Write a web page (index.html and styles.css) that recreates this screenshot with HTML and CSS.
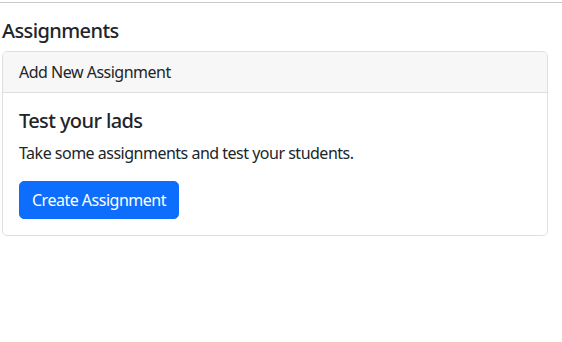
FILE: index.html
```html
<!DOCTYPE html>
<html lang="en">
<head>
    <meta charset="UTF-8">
    <meta name="viewport" content="width=device-width, initial-scale=1.0">
    <title>Assignments</title>
    <link rel="stylesheet" href="styles.css">
</head>
<body>
    <hr class="divider">
    <div class="content">
        <h5 class="section-title">Assignments</h5>
        <div class="card">
            <div class="card-header">Add New Assignment</div>
            <div class="card-body">
                <h5 class="card-title">Test your lads</h5>
                <p class="card-text">Take some assignments and test your students.</p>
                <button class="btn btn-primary">Create Assignment</button>
            </div>
        </div>
    </div>
</body>
</html>
```

FILE: styles.css
```css
body {
    font-family: 'Noto Sans', 'Open Sans', sans-serif;
    font-size: 16px;
    line-height: 1.5;
    letter-spacing: -0.5px;
    margin: 0;
    color: #212529;
    background: #fff;
}
.divider {
    margin: 2px 0 16px;
    border: 0;
    border-top: 1px solid #c8c9ca;
}
.content {
    width: 546px;
    padding: 0 2px;
}
.section-title {
    margin: 0 0 8px;
    font-size: 20px;
    font-weight: 500;
    line-height: 1.2;
    letter-spacing: -0.6px;
}
.card {
    border: 1px solid #dfdfdf;
    border-radius: 5px;
    overflow: hidden;
}
.card-header {
    padding: 8px 16px;
    background: #f7f7f7;
    border-bottom: 1px solid #dfdfdf;
}
.card-body {
    padding: 16px;
}
.card-title {
    margin: 0 0 8px;
    font-size: 20px;
    font-weight: 500;
    line-height: 1.2;
    letter-spacing: -0.6px;
}
.card-text {
    margin: 0 0 16px;
}
.btn {
    font-family: inherit;
    font-size: 16px;
    line-height: 1.5;
    letter-spacing: -0.5px;
    padding: 6px 12px;
    border: 1px solid transparent;
    border-radius: 5px;
    cursor: pointer;
}
.btn-primary {
    background: #0d6efd;
    border-color: #0d6efd;
    color: #fff;
}
.btn-primary:hover {
    background: #0b5ed7;
}
```
